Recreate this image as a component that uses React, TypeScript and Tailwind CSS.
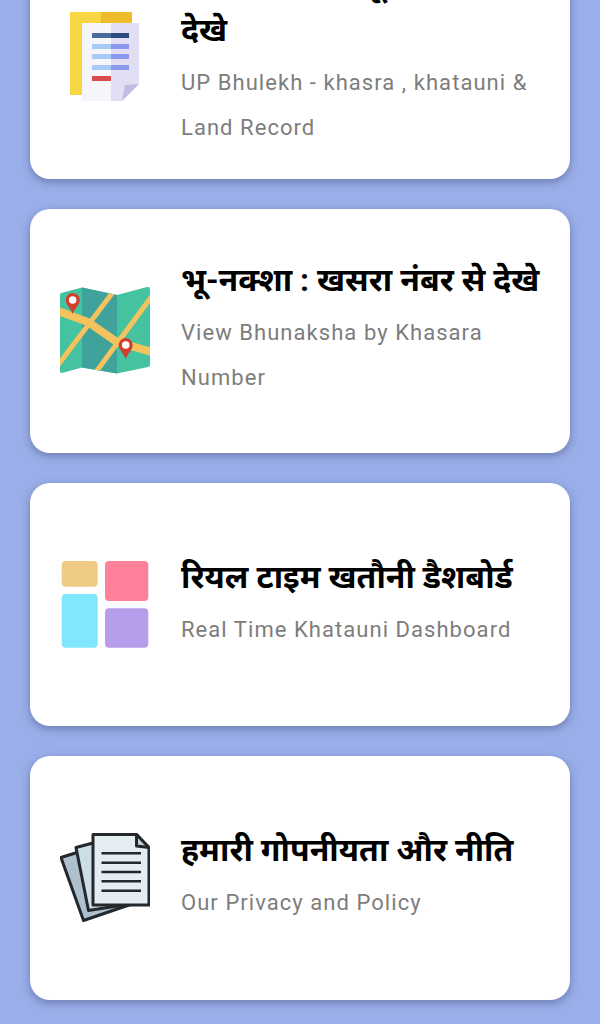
const Doc = () => (
  <svg width="90" height="90" viewBox="0 0 90 90" className="blur-[0.7px]">
    <rect x="10" y="0" width="31" height="83" fill="#f6d743" />
    <rect x="41" y="0" width="31" height="12" fill="#eebb2a" />
    <polygon points="22,11 51,11 51,89 22,89" fill="#f6f6fa" />
    <polygon points="51,11 79,11 79,72 62,89 51,89" fill="#e2dff4" />
    <polygon points="62,89 65,73 79,72" fill="#c0bde3" />
    <rect x="32" y="21" width="19" height="5" fill="#4d6a9e" />
    <rect x="51" y="21" width="18" height="5" fill="#2c4a7c" />
    <rect x="32" y="32" width="19" height="5" fill="#a9c9f7" />
    <rect x="51" y="32" width="18" height="5" fill="#8b98f0" />
    <rect x="32" y="42" width="19" height="5" fill="#a9c9f7" />
    <rect x="51" y="42" width="18" height="5" fill="#8b98f0" />
    <rect x="32" y="53" width="19" height="5" fill="#a9c9f7" />
    <rect x="51" y="53" width="18" height="5" fill="#8b98f0" />
    <rect x="32" y="64" width="19" height="5" fill="#d94b4b" />
  </svg>
);

const Pin = ({ x, y }: { x: number; y: number }) => (
  <g transform={`translate(${x} ${y})`}>
    <path d="M0 14 C-2 8 -7 5 -7 0 A7 7 0 0 1 7 0 C7 5 2 8 0 14 Z" fill="#cf3f2e" />
    <circle r="3.8" fill="#ffffff" />
  </g>
);

const MapIcon = () => (
  <svg width="90" height="90" viewBox="0 0 90 90" className="blur-[0.7px]">
    <defs>
      <clipPath id="mapClip">
        <path d="M1 7 L22 1.5 L57 9 L87 1 Q90 0.5 90 3 L90 79 Q90 81 88 81 L57 87.5 L22 81.5 L2 87 Q0 87.5 0 85 L0 9 Q0 7.5 1 7 Z" />
      </clipPath>
    </defs>
    <g clipPath="url(#mapClip)">
      <rect width="90" height="90" fill="#45c29f" />
      <rect x="22" width="35" height="90" fill="#3fa39c" />
      <path d="M-2 25 L28 36 L57 56 L92 66" fill="none" stroke="#f5c35e" strokeWidth="8" />
      <path d="M53 6 L-2 79" fill="none" stroke="#f5c35e" strokeWidth="5" />
      <path d="M92 10 L36 86" fill="none" stroke="#f5c35e" strokeWidth="5" />
    </g>
    <Pin x={12.7} y={14} />
    <Pin x={65.7} y={59} />
  </svg>
);

const Dash = () => (
  <svg width="90" height="90" viewBox="0 0 90 90" className="blur-[0.7px]">
    <rect x="1.7" y="1" width="36" height="25.7" rx="4" fill="#efcb84" />
    <rect x="45" y="1" width="43.3" height="40" rx="4" fill="#ff8099" />
    <rect x="1.7" y="34" width="36" height="53.7" rx="4" fill="#80e7fd" />
    <rect x="45" y="48.3" width="43.3" height="39.4" rx="4" fill="#b99ded" />
  </svg>
);

const Papers = () => (
  <svg width="90" height="90" viewBox="0 0 90 90" className="blur-[0.5px]">
    <g stroke="#22282c" strokeWidth="3" strokeLinejoin="round">
      <polygon points="1,24.5 17,19.5 50,72 72,71 23.5,87.5" fill="#adc0cc" />
      <polygon points="16,14.5 33,10 70,71 28.5,77.5" fill="#cddde5" />
      <polygon points="33,1.5 76.5,1.5 89,14.5 89,72 33,72" fill="#e3edf2" />
      <polygon points="76.5,1.5 76.5,13 89,14.5" fill="#c3d3dc" />
    </g>
    <g stroke="#22282c" strokeWidth="2.4">
      <line x1="41.5" x2="81" y1="20.3" y2="20.3" />
      <line x1="41.5" x2="81" y1="29.7" y2="29.7" />
      <line x1="41.5" x2="81" y1="39" y2="39" />
      <line x1="41.5" x2="81" y1="48.3" y2="48.3" />
      <line x1="41.5" x2="81" y1="57.7" y2="57.7" />
    </g>
  </svg>
);

const Card = ({ icon, title, sub }: { icon: React.ReactNode; title: string; sub: string }) => (
  <div className="flex h-[243.7px] shrink-0 items-center rounded-[20px] bg-white pl-[30px] pr-[20px] shadow-[0_3px_8px_rgba(40,50,90,0.4)]">
    <div className="h-[90px] w-[90px] shrink-0">{icon}</div>
    <div className="ml-[31px] min-w-0 flex-1">
      <div className="-mt-[4px] text-[32px] font-bold leading-[46px] text-black">{title}</div>
      <div className="mt-[7px] text-[22px] leading-[45px] tracking-[1.05px] text-[#7d7d7d]">{sub}</div>
    </div>
  </div>
);

export default function App() {
  return (
    <div className="h-[1024px] w-[600px] overflow-hidden bg-[#9aaee9] font-['Roboto','Noto_Sans','Noto_Sans_Devanagari',sans-serif]">
      <div className="-mt-[64.7px] flex flex-col gap-[30px] px-[30px]">
        <Card icon={<Doc />} title="खसरा खतौनी भूलेख नकल देखे" sub="UP Bhulekh - khasra , khatauni & Land Record" />
        <Card icon={<MapIcon />} title="भू-नक्शा : खसरा नंबर से देखे" sub="View Bhunaksha by Khasara Number" />
        <Card icon={<Dash />} title="रियल टाइम खतौनी डैशबोर्ड" sub="Real Time Khatauni Dashboard" />
        <Card icon={<Papers />} title="हमारी गोपनीयता और नीति" sub="Our Privacy and Policy" />
      </div>
    </div>
  );
}
